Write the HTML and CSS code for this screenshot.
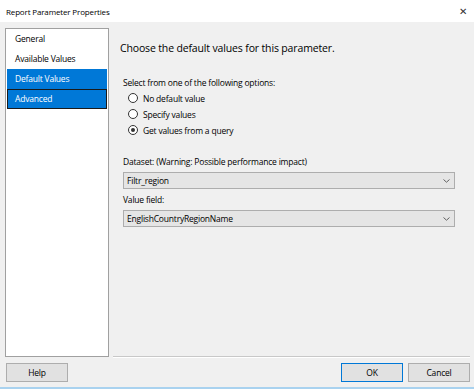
FILE: index.html
```html
<!DOCTYPE html>
<html lang="en">

<head>
    <meta charset="UTF-8">
    <title>Report Parameter Properties</title>
    <link rel="stylesheet" href="styles.css">
</head>

<body>
    <div class="window">
        <div class="titlebar">
            <span class="title">Report Parameter Properties</span>
            <span class="close">&#x2715;</span>
        </div>

        <div class="dialog">
            <div class="main">
                <ul class="nav">
                    <li>General</li>
                    <li>Available Values</li>
                    <li class="selected">Default Values</li>
                    <li class="selected focused">Advanced</li>
                </ul>

                <div class="content">
                    <h1>Choose the default values for this parameter.</h1>

                    <p class="prompt">Select from one of the following options:</p>
                    <div class="options">
                        <label class="radio"><span class="dot"></span>No default value</label>
                        <label class="radio"><span class="dot"></span>Specify values</label>
                        <label class="radio checked"><span class="dot"></span>Get values from a query</label>
                    </div>

                    <div class="field">
                        <span class="field-label">Dataset: (Warning: Possible performance impact)</span>
                        <div class="combo">
                            <span>Filtr_region</span>
                            <svg class="chevron" width="7" height="4" viewBox="0 0 7 4"><path d="M0.5 0.5 L3.5 3.2 L6.5 0.5" fill="none" stroke="#606060" stroke-width="1"/></svg>
                        </div>
                    </div>

                    <div class="field">
                        <span class="field-label">Value field:</span>
                        <div class="combo">
                            <span>EnglishCountryRegionName</span>
                            <svg class="chevron" width="7" height="4" viewBox="0 0 7 4"><path d="M0.5 0.5 L3.5 3.2 L6.5 0.5" fill="none" stroke="#606060" stroke-width="1"/></svg>
                        </div>
                    </div>
                </div>
            </div>

            <div class="footer">
                <button class="btn">Help</button>
                <div class="spacer"></div>
                <button class="btn default">OK</button>
                <button class="btn">Cancel</button>
            </div>
        </div>
    </div>
</body>

</html>
```

FILE: styles.css
```css
/* window frame */

body {
    margin: 0;
    font-family: 'Open Sans', 'Noto Sans', sans-serif;
    font-size: 8.5px;
    letter-spacing: -0.2px;
    color: #000;
    background: #fff;
}

.window {
    width: 474px;
    height: 389px;
    display: flex;
    flex-direction: column;
    border-bottom: 3px solid #a9d2ef;
    box-sizing: border-box;
}

.titlebar {
    height: 22px;
    background: #fff;
    display: flex;
    align-items: center;
    justify-content: space-between;
    padding: 0 7px 0 6px;
    flex-shrink: 0;
}

.title {
    font-size: 8px;
    letter-spacing: -0.15px;
}

.close {
    font-size: 10px;
    color: #333;
}

.dialog {
    flex: 1;
    background: #f0f0f0;
    display: flex;
    flex-direction: column;
    padding: 6px 4px 5px 5px;
}

.main {
    display: flex;
    gap: 4px;
    height: 329px;
}

/* left navigation list */

.nav {
    list-style: none;
    margin: 0;
    padding: 0 1px;
    width: 104px;
    box-sizing: border-box;
    background: #fff;
    border: 1px solid #a0a0a0;
}

.nav li {
    height: 20px;
    line-height: 20px;
    padding-left: 8px;
    box-sizing: border-box;
}

.nav li.selected {
    background: #0078d7;
    color: #fff;
}

.nav li.focused {
    border: 1px solid #1a1a1a;
    line-height: 18px;
    padding-left: 7px;
}

/* right side page */

.content {
    flex: 1;
    border-bottom: 1px solid #c8c8c8;
    box-shadow: 0 1px 0 #fff;
    padding: 0 15px 0 7px;
}

h1 {
    font-size: 10.5px;
    letter-spacing: -0.15px;
    font-weight: normal;
    margin: 13px 0 0;
}

.prompt {
    margin: 22px 0 0 3px;
}

.options {
    display: flex;
    flex-direction: column;
    margin: 2px 0 0 8px;
}

.radio {
    display: flex;
    align-items: center;
    gap: 5px;
    height: 16px;
}

.dot {
    width: 8px;
    height: 8px;
    border: 1px solid #333;
    border-radius: 50%;
    background: #fff;
    position: relative;
}

.radio.checked .dot::after {
    content: "";
    position: absolute;
    left: 2px;
    top: 2px;
    width: 4px;
    height: 4px;
    border-radius: 50%;
    background: #333;
}

.field {
    display: flex;
    flex-direction: column;
    margin: 17px 0 0 3px;
}

.field + .field {
    margin-top: 4px;
}

.field-label {
    height: 14px;
    line-height: 14px;
}

.combo {
    margin-top: 3px;
    height: 17px;
    box-sizing: border-box;
    border: 1px solid #adadad;
    background: #e5e5e5;
    display: flex;
    align-items: center;
    justify-content: space-between;
    padding: 0 4px 0 3px;
}

/* bottom buttons */

.footer {
    display: flex;
    gap: 5px;
    margin-top: 6px;
    padding-left: 1px;
}

.spacer {
    flex: 1;
}

.btn {
    width: 62px;
    height: 19px;
    font-family: inherit;
    font-size: 8.5px;
    letter-spacing: -0.2px;
    background: #e1e1e1;
    border: 1px solid #adadad;
    padding: 0;
}

.btn.default {
    border-color: #0078d7;
}
```
